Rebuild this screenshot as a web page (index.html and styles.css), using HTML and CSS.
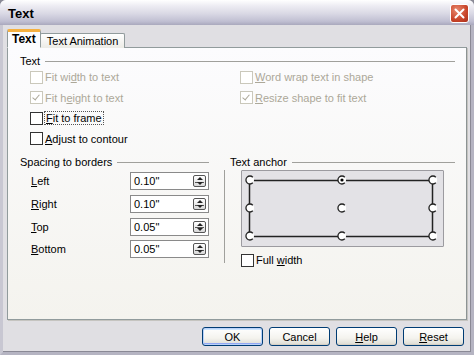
FILE: index.html
```html
<!DOCTYPE html>
<html>
<head>
<meta charset="utf-8">
<link rel="stylesheet" href="styles.css">
</head>
<body>
<div class="window">
  <div class="titlebar">
    <span class="title">Text</span>
    <span class="close"><svg width="11" height="11" viewBox="0 0 11 11"><path d="M1.5 1.5 L9.5 9.5 M9.5 1.5 L1.5 9.5" stroke="#fff" stroke-width="2" stroke-linecap="round"/></svg></span>
  </div>
  <div class="body">
    <div class="tabs">
      <div class="tab active">Text</div>
      <div class="tab">Text Animation</div>
    </div>
    <div class="panel">
      <div class="group-head"><span>Text</span><i class="rule"></i></div>
      <div class="checks">
        <div class="col">
          <label class="chk disabled"><span class="box"></span><span>Fit wi<u>d</u>th to text</span></label>
          <label class="chk disabled"><span class="box checked"></span><span>Fit h<u>e</u>ight to text</span></label>
          <label class="chk"><span class="box"></span><span class="focus"><u>F</u>it to frame</span></label>
          <label class="chk"><span class="box"></span><span><u>A</u>djust to contour</span></label>
        </div>
        <div class="col">
          <label class="chk disabled"><span class="box"></span><span><u>W</u>ord wrap text in shape</span></label>
          <label class="chk disabled"><span class="box checked"></span><span><u>R</u>esize shape to fit text</span></label>
        </div>
      </div>
      <div class="lower">
        <div class="spacing">
          <div class="group-head"><span>Spacing to borders</span><i class="rule"></i></div>
          <div class="rows">
            <div class="row"><span class="lbl"><u>L</u>eft</span><span class="field">0.10"<span class="spin"></span></span></div>
            <div class="row"><span class="lbl"><u>R</u>ight</span><span class="field">0.10"<span class="spin"></span></span></div>
            <div class="row"><span class="lbl"><u>T</u>op</span><span class="field">0.05"<span class="spin"></span></span></div>
            <div class="row"><span class="lbl"><u>B</u>ottom</span><span class="field">0.05"<span class="spin"></span></span></div>
          </div>
        </div>
        <div class="anchor">
          <div class="group-head"><span>Text anchor</span><i class="rule"></i></div>
          <div class="anchor-body">
            <div class="anchor-box">
              <svg width="203" height="77" viewBox="0 0 203 77">
                <defs>
                  <g id="dot">
                    <circle r="4" fill="#fff"/>
                    <path d="M2.8 -2.8 A4 4 0 1 0 2.8 2.8" fill="none" stroke="#222" stroke-width="1.3"/>
                  </g>
                </defs>
                <rect x="8.5" y="10.5" width="183" height="56" fill="none" stroke="#222" stroke-width="1.5"/>
                <use href="#dot" x="9" y="10"/>
                <use href="#dot" x="101" y="10"/>
                <use href="#dot" x="192" y="10"/>
                <use href="#dot" x="9" y="38"/>
                <use href="#dot" x="101" y="38"/>
                <use href="#dot" x="192" y="38"/>
                <use href="#dot" x="9" y="66"/>
                <use href="#dot" x="101" y="66"/>
                <use href="#dot" x="192" y="66"/>
                <circle cx="101" cy="10" r="1.6" fill="#000"/>
              </svg>
            </div>
            <label class="chk"><span class="box"></span><span>Full <u>w</u>idth</span></label>
          </div>
        </div>
      </div>
    </div>
    <div class="buttons">
      <button class="btn default">OK</button>
      <button class="btn">Cancel</button>
      <button class="btn"><u>H</u>elp</button>
      <button class="btn"><u>R</u>eset</button>
    </div>
  </div>
</div>
</body>
</html>
```

FILE: styles.css
```css
html, body {
  margin: 0;
  padding: 0;
  background: #8a8a96;
}
body {
  width: 474px;
  height: 355px;
  overflow: hidden;
  font-family: "Liberation Sans", Arial, sans-serif;
  font-size: 11px;
  color: #000;
}
u { text-decoration: underline; text-underline-offset: 1px; }

.window {
  box-sizing: border-box;
  width: 474px;
  height: 355px;
  background: #e0dfe3;
  border-left: 3px solid #c8c7d2;
  border-right: 3px solid #b5b4c2;
  border-bottom: 3px solid #b5b4c2;
  border-top-left-radius: 6px;
  border-top-right-radius: 6px;
  display: flex;
  flex-direction: column;
  box-shadow: inset -1px -1px 0 #8a8995;
}
.titlebar {
  height: 25px;
  margin: 0 -3px;
  border-top-left-radius: 6px;
  border-top-right-radius: 6px;
  background: linear-gradient(#ffffff 0%, #ecebf2 25%, #d9d8e4 55%, #c0bfd2 85%, #a9a8bd 100%);
  display: flex;
  align-items: center;
  justify-content: space-between;
  padding: 0 5px 0 8px;
  box-sizing: border-box;
}
.title {
  font-weight: bold;
  font-size: 13px;
  color: #000;
  padding-top: 1px;
}
.close {
  width: 19px;
  height: 19px;
  box-sizing: border-box;
  border: 1px solid #fff;
  border-radius: 3px;
  background: radial-gradient(circle at 35% 30%, #e8896f, #c9452a 60%, #a8301c);
  display: flex;
  align-items: center;
  justify-content: center;
  margin-top: 1px;
}

.body {
  flex: 1;
  display: flex;
  flex-direction: column;
  padding: 6px 4px 0 4px;
}
.tabs {
  display: flex;
  align-items: flex-end;
  height: 17px;
  position: relative;
  z-index: 1;
  margin-bottom: -1px;
}
.tab {
  height: 15px;
  line-height: 14px;
  padding: 0 6px;
  border: 1px solid #919b9c;
  border-bottom: none;
  border-radius: 2px 2px 0 0;
  background: linear-gradient(#ffffff, #ecebe6);
  box-sizing: border-box;
}
.tab + .tab { margin-left: -1px; }
.tab.active {
  font-weight: bold;
  font-size: 12px;
  padding: 0 4px;
  background: #fcfcfe;
  border-top: 3px solid #f5b040;
  line-height: 15px;
  position: relative;
  z-index: 2;
  border-bottom: 1px solid #fcfcfe;
  height: 19px;
}
.panel {
  box-sizing: border-box;
  height: 273px;
  border: 1px solid #919b9c;
  border-right-color: #8c9394;
  background: linear-gradient(#fcfcfe 0%, #f4f3ee 100%);
  padding: 6px 11px 0 12px;
  box-shadow: 1px 1px 0 #c5c4c0;
}
.group-head {
  display: flex;
  align-items: center;
  height: 13px;
}
.group-head .rule {
  flex: 1;
  height: 0;
  border-top: 1px solid #a0a09c;
  margin-left: 5px;
  margin-top: 1px;
}

.checks {
  display: grid;
  grid-template-columns: 210px 1fr;
  padding-left: 10px;
  margin-top: 0;
}
.col { display: flex; flex-direction: column; }
.chk {
  display: flex;
  align-items: center;
  height: 20.5px;
  white-space: nowrap;
}
.chk.disabled { color: #aca899; }
.box {
  width: 13px;
  height: 13px;
  box-sizing: border-box;
  border: 1px solid #333;
  background: #fff;
  margin-right: 2px;
  position: relative;
  flex: none;
}
.disabled .box { border-color: #cac8bb; }
.box.checked::after {
  content: "";
  position: absolute;
  left: 3px;
  top: 1px;
  width: 3px;
  height: 6px;
  border: solid #aca899;
  border-width: 0 1.5px 1.5px 0;
  transform: rotate(40deg);
}
.focus {
  outline: 1px dotted #555;
  outline-offset: 0;
  padding: 0 1px;
}

.lower {
  display: flex;
  margin-top: 6px;
}
.spacing {
  width: 189px;
  flex: none;
}
.rows {
  padding-left: 11px;
  padding-top: 2px;
}
.row {
  display: flex;
  align-items: center;
  justify-content: space-between;
  height: 22.7px;
}
.field {
  box-sizing: border-box;
  width: 79px;
  height: 18px;
  border: 1px solid #8a8a8a;
  background: #fff;
  display: flex;
  align-items: center;
  justify-content: space-between;
  padding: 0 2px 0 3px;
}
.spin {
  width: 13px;
  height: 12px;
  box-sizing: border-box;
  border: 1px solid #555;
  border-radius: 2px;
  background:
    linear-gradient(#555, #555) center 5.5px / 9px 1px no-repeat,
    linear-gradient(#fff, #d8d8d8);
  position: relative;
}
.spin::before, .spin::after {
  content: "";
  position: absolute;
  left: 2.5px;
  width: 0;
  height: 0;
  border-left: 3.5px solid transparent;
  border-right: 3.5px solid transparent;
}
.spin::before { top: 1px; border-bottom: 3px solid #222; }
.spin::after { bottom: 1px; border-top: 3px solid #222; }

.anchor {
  flex: 1;
  margin-left: 21px;
}
.anchor-body {
  margin-top: 2px;
  border-left: 1px solid #a0a09c;
  margin-left: -6px;
  padding-left: 16px;
  height: 93px;
}
.anchor-box {
  width: 203px;
  height: 77px;
  box-sizing: border-box;
  background: #e3e2e6;
  border: 1px solid #9c9ba0;
  border-radius: 1px;
  display: flex;
}
.anchor-box svg { display: block; margin: -1px; }
.anchor-body .chk { height: 26px; }

.buttons {
  display: flex;
  justify-content: flex-end;
  gap: 6px;
  padding: 7px 3px 0 0;
}
.btn {
  width: 61px;
  height: 19px;
  box-sizing: border-box;
  border: 1px solid #003c74;
  border-radius: 3px;
  background: linear-gradient(#ffffff 0%, #f4f3ee 60%, #dcdad2 100%);
  font-family: "Liberation Sans", Arial, sans-serif;
  font-size: 11px;
  color: #000;
  padding: 0;
  box-shadow: inset 0 -1px 0 #d6d0c5;
}
.btn.default {
  box-shadow: inset 0 0 0 1px #b9d1fa, inset 0 -2px 0 #91a7f4, inset 0 2px 0 #cee7ff;
}
```
